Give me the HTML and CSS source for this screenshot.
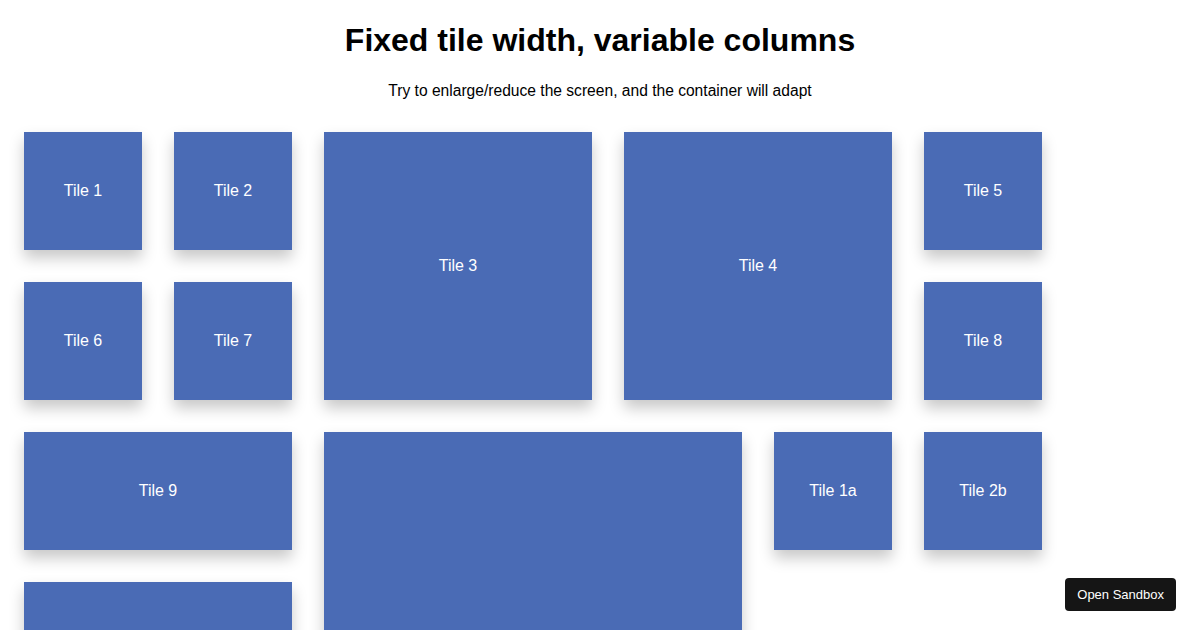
FILE: index.html
```html
<!DOCTYPE html>
<html lang="en">
<head>
    <meta charset="UTF-8">
    <meta name="viewport" content="width=device-width, initial-scale=1.0">
    <title>Fixed tile width, variable columns</title>
    <link rel="stylesheet" href="styles.css">
</head>
<body>
    <h1>Fixed tile width, variable columns</h1>
    <p class="subtitle">Try to enlarge/reduce the screen, and the container will adapt</p>

    <div class="grid">
        <div class="tile">Tile 1</div>
        <div class="tile">Tile 2</div>
        <div class="tile big">Tile 3</div>
        <div class="tile big">Tile 4</div>
        <div class="tile">Tile 5</div>
        <div class="tile">Tile 6</div>
        <div class="tile">Tile 7</div>
        <div class="tile">Tile 8</div>
        <div class="tile wide">Tile 9</div>
        <div class="tile huge">Tile 10</div>
        <div class="tile">Tile 1a</div>
        <div class="tile">Tile 2b</div>
        <div class="tile wide">Tile 11</div>
    </div>

    <a class="sandbox" href="#">Open Sandbox</a>
</body>
</html>
```

FILE: styles.css
```css
body {
    font-family: "Liberation Sans", Arial, sans-serif;
    margin: 0;
    padding: 0 24px;
    background-color: #fff;
    color: #000;
    overflow: hidden;
    height: 630px;
}
h1 {
    text-align: center;
    font-size: 32px;
    line-height: 37px;
    margin: 22px 0 0;
}
.subtitle {
    text-align: center;
    font-size: 15.6px;
    line-height: 18px;
    margin: 23px 0 32px;
}
.grid {
    display: grid;
    grid-template-columns: repeat(7, 118px);
    grid-auto-rows: 118px;
    gap: 32px;
}
.tile {
    background-color: #4a6bb5;
    color: #fff;
    font-size: 16px;
    display: flex;
    align-items: center;
    justify-content: center;
    box-shadow: 0 8px 14px rgba(0, 0, 0, 0.22);
}
.tile.big {
    grid-column: span 2;
    grid-row: span 2;
}
.tile.wide {
    grid-column: span 2;
}
.tile.huge {
    grid-column: span 3;
    grid-row: span 3;
}
.sandbox {
    position: fixed;
    right: 24px;
    bottom: 19px;
    background-color: #151515;
    color: #fff;
    font-size: 13px;
    text-decoration: none;
    padding: 9px 12px;
    border-radius: 4px;
    line-height: 15px;
}
```
